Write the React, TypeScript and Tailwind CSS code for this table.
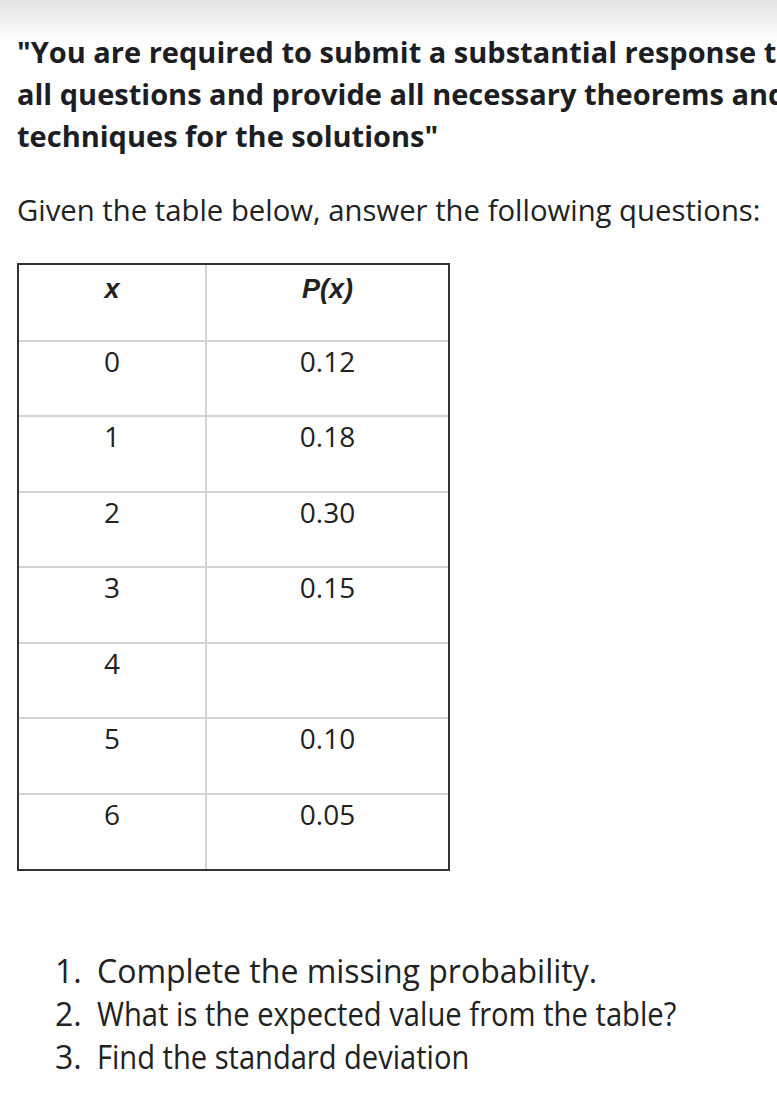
import React from "react";

const rows: [string, string][] = [
  ["0", "0.12"],
  ["1", "0.18"],
  ["2", "0.30"],
  ["3", "0.15"],
  ["4", ""],
  ["5", "0.10"],
  ["6", "0.05"],
];

export default function App() {
  return (
    <div className="w-[777px] h-[1099px] overflow-hidden bg-white relative font-['Open_Sans',sans-serif]">
      <div className="absolute inset-x-0 top-0 h-[42px] bg-gradient-to-b from-[#e3e3e3] to-white" />
      <div className="relative pt-[31px] pl-[17px]">
        <div className="whitespace-nowrap text-[29px] font-bold leading-[42px] text-[#1c1e23]">
          <div>"You are required to submit a substantial response to</div>
          <div>all questions and provide all necessary theorems and</div>
          <div>techniques for the solutions"</div>
        </div>
        <p className="mt-[33px] whitespace-nowrap text-[29.3px] leading-[40px] text-[#222]">
          Given the table below, answer the following questions:
        </p>
        <div className="mt-[33px] w-[433px] border-2 border-[#333]">
          <table className="w-full border-collapse border-hidden text-[#222]">
            <tbody>
              <tr className="h-[75.5px]">
                <th className="w-[187px] border-2 border-[#d4d4d4] align-top pt-[8px] text-[27px] leading-[32px] font-bold italic font-['Liberation_Sans',sans-serif]">
                  x
                </th>
                <th className="border-2 border-[#d4d4d4] align-top pt-[8px] text-[27px] leading-[32px] font-bold italic font-['Liberation_Sans',sans-serif]">
                  P(x)
                </th>
              </tr>
              {rows.map(([x, p]) => (
                <tr key={x} className="h-[75.5px]">
                  <td className="border-2 border-[#d4d4d4] align-top pt-[2px] text-center text-[28px] leading-[34px]">{x}</td>
                  <td className="border-2 border-[#d4d4d4] align-top pt-[2px] text-center text-[28px] leading-[34px]">{p}</td>
                </tr>
              ))}
            </tbody>
          </table>
        </div>
        <ol className="mt-[78px] pl-[38px] text-[32px] leading-[43px] text-[#222]">
          <li className="flex whitespace-nowrap">
            <span className="w-[42px] shrink-0">1.</span>
            <span>Complete the missing probability.</span>
          </li>
          <li className="flex whitespace-nowrap">
            <span className="w-[42px] shrink-0">2.</span>
            <span className="inline-block origin-left scale-x-[0.912]">What is the expected value from the table?</span>
          </li>
          <li className="flex whitespace-nowrap">
            <span className="w-[42px] shrink-0">3.</span>
            <span className="inline-block origin-left scale-x-[0.909]">Find the standard deviation</span>
          </li>
        </ol>
      </div>
    </div>
  );
}
